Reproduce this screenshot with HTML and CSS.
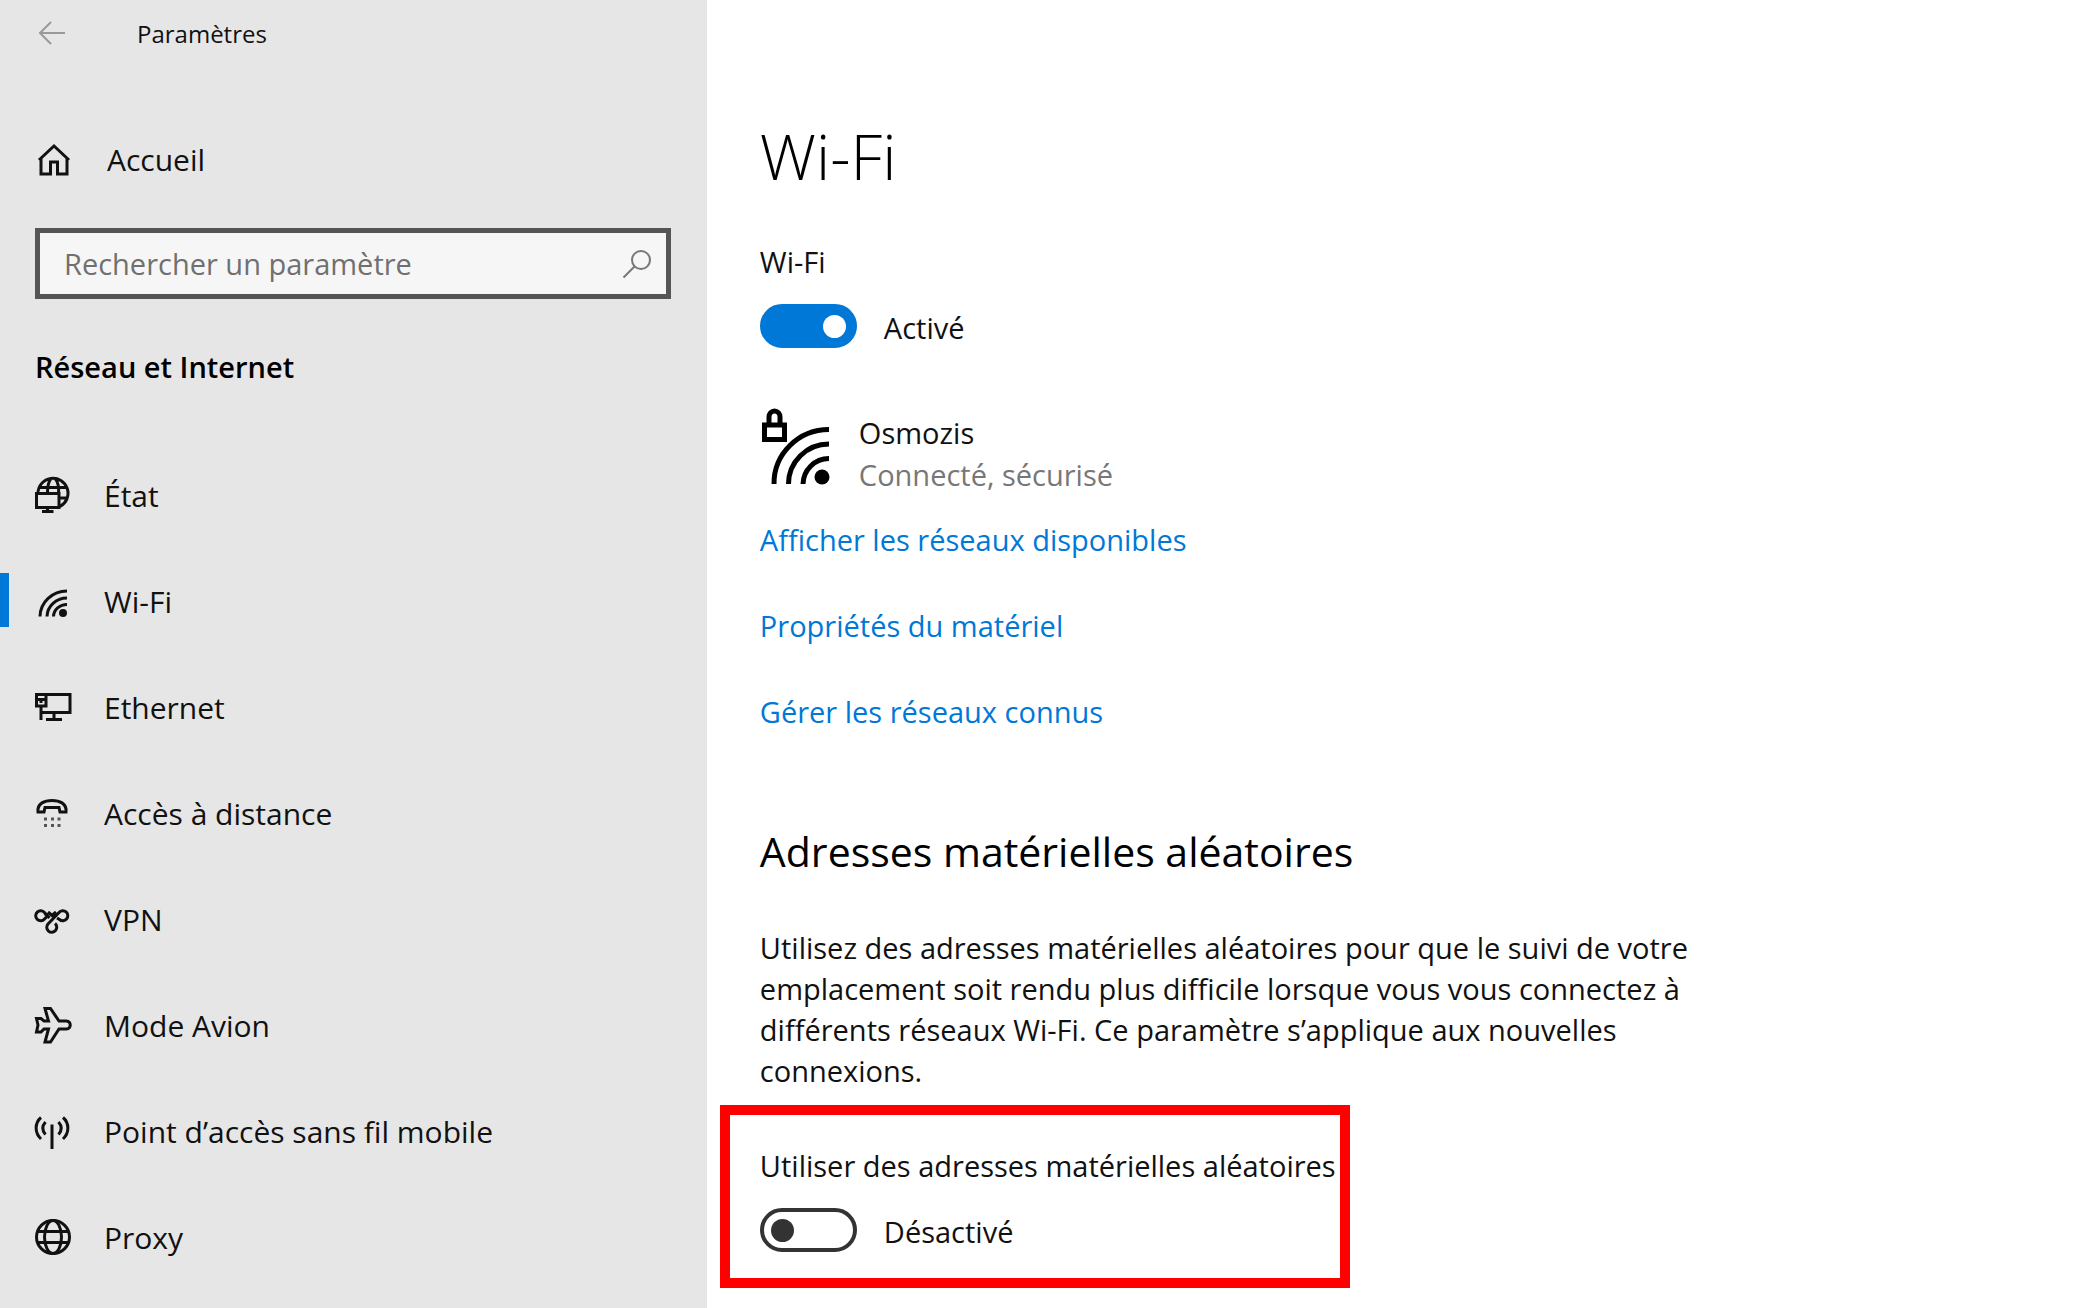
FILE: index.html
```html
<!DOCTYPE html>
<html lang="fr">
<head>
<meta charset="utf-8">
<meta name="viewport" content="width=device-width, initial-scale=1">
<title>Paramètres</title>
<link rel="stylesheet" href="styles.css">
</head>
<body>
<div class="app">
  <aside class="sidebar">
    <header class="titlebar">
      <button class="back" type="button" aria-label="Retour">
        <svg width="28" height="28" viewBox="0 0 28 28"><path d="M27 13H2M13 2L2 13l11 11"/></svg>
      </button>
      <span class="app-name">Paramètres</span>
    </header>
    <a class="home" href="#accueil">
      <svg class="icon" viewBox="0 0 36 36"><path d="M4 18L19 4l15 14M6 17V32H15.500V20h7V32h9.500V17"/></svg>
      <span>Accueil</span>
    </a>
    <label class="search">
      <input type="search" placeholder="Rechercher un paramètre" aria-label="Rechercher un paramètre">
      <svg width="30" height="30" viewBox="0 0 30 30"><circle cx="19" cy="11" r="9"/><path d="M12.500 17.500L1.500 28.500"/></svg>
    </label>
    <h2 class="category">Réseau et Internet</h2>
    <nav class="nav">
      <a href="#etat">
        <svg class="icon" viewBox="0 0 36 36"><path d="M3 17A15 15 0 1 1 25 30.500M5 11.500H31M24 22H31.500M12.500 17C12.500 10 14 5 16 2.500M20 2.500C23 5 24 12 23.500 17M1.500 17.500H24V31.500H1.500ZM12.500 32v3.500M7 35.500H18.500"/></svg>
        <span>État</span>
      </a>
      <a href="#wifi" class="active" aria-current="page">
        <svg class="icon" viewBox="0 0 36 36"><path d="M5 34.500A27 26 0 0 1 32 9M12 34.500A20 19 0 0 1 32 16M18.500 34.500A13.500 12.500 0 0 1 32 22.500"/><circle class="solid" cx="28" cy="31" r="2.500"/></svg>
        <span>Wi-Fi</span>
      </a>
      <a href="#ethernet">
        <svg class="icon" viewBox="0 0 36 36"><path d="M11 6.500H35V24.500H6M1.500 6.500H11V18H1.500ZM1.500 11.500H11M6 11v4M6 18V32M19 25v6M11 31.500H27"/></svg>
        <span>Ethernet</span>
      </a>
      <a href="#distance">
        <svg class="icon" viewBox="0 0 36 36"><path d="M3 18C2 9 10 6.500 17 6.500S32 9 31 18H25L24 13.500H10L9 18Z"/><path class="dots" d="M9 25h3M16 25h3M22.500 25h3M9 31.500h3M16 31.500h3M22.500 31.500h3"/></svg>
        <span>Accès à distance</span>
      </a>
      <a href="#vpn">
        <svg class="icon" viewBox="0 0 36 36"><path d="M9.500 12.500A5 5 0 1 0 9.500 19L12 16.500L9.500 12.500L14.500 18M13 12l4 3.500 4-3.500M20 23.500A5 5 0 1 1 13 24L24 12.500A5 5 0 1 1 24.500 19.500L22 18"/></svg>
        <span>VPN</span>
      </a>
      <a href="#avion">
        <svg class="icon" viewBox="0 0 36 36"><path d="M10 2.500H15.500L24 15H31.500C36.500 15 36.500 23 31.500 23H24L15.500 36H10L13.500 23H9L6 26H1.500L3 19L1.500 12.500H6L9 15H13.500Z"/></svg>
        <span>Mode Avion</span>
      </a>
      <a href="#point-acces">
        <svg class="icon" viewBox="0 0 36 36"><path d="M6 5.500C-.500 11 -.500 21 6 27M10.500 10C7 14 7 18.500 10.500 22.500M28 5.500C34.500 11 34.500 21 28 27M23.500 10C27 14 27 18.500 23.500 22.500M17 12.500V37"/></svg>
        <span>Point d’accès sans fil mobile</span>
      </a>
      <a href="#proxy">
        <svg class="icon" viewBox="0 0 36 36"><circle cx="18" cy="19" r="16.500"/><ellipse cx="18" cy="19" rx="8.500" ry="16.500"/><path d="M2.500 13.500H33.500M2.500 24.500H33.500"/></svg>
        <span>Proxy</span>
      </a>
    </nav>
  </aside>

  <main class="content">
    <h1>Wi-Fi</h1>
    <section class="setting">
      <label for="wifi-switch">Wi-Fi</label>
      <div class="switch-row">
        <input class="switch" id="wifi-switch" type="checkbox" role="switch" checked>
        <span>Activé</span>
      </div>
    </section>
    <section class="network">
      <svg width="76" height="82" viewBox="0 0 76 82">
        <path class="arc" d="M14 76A55 54 0 0 1 69 21.500M28.500 76A40.500 40 0 0 1 69 36M43 76A26 26 0 0 1 69 50.500"/>
        <circle cx="62" cy="69" r="7.500"/>
        <path class="lock" d="M4.500 17H24.500V31.500H4.500ZM9 17V9a5.500 6 0 0 1 11 0V17"/>
      </svg>
      <div class="network-text">
        <div>Osmozis</div>
        <div class="status">Connecté, sécurisé</div>
      </div>
    </section>
    <div class="links">
      <a href="#reseaux">Afficher les réseaux disponibles</a>
      <a href="#materiel">Propriétés du matériel</a>
      <a href="#connus">Gérer les réseaux connus</a>
    </div>
    <h2>Adresses matérielles aléatoires</h2>
    <p>Utilisez des adresses matérielles aléatoires pour que le suivi de votre emplacement soit rendu plus difficile lorsque vous vous connectez à différents réseaux Wi-Fi. Ce paramètre s’applique aux nouvelles connexions.</p>
    <section class="setting highlight">
      <label for="random-switch">Utiliser des adresses matérielles aléatoires</label>
      <div class="switch-row">
        <input class="switch" id="random-switch" type="checkbox" role="switch">
        <span>Désactivé</span>
      </div>
    </section>
  </main>
</div>
</body>
</html>
```
FILE: styles.css
```css
* { box-sizing: border-box; }

body {
  margin: 0;
  background: #fff;
  color: #111;
  font: 29px/40px "Segoe UI", "Open Sans", "Noto Sans", sans-serif;
}

h1, h2, p { margin: 0; }
a { color: inherit; text-decoration: none; }
svg { flex: none; fill: none; stroke: currentColor; overflow: visible; }

.app { display: flex; min-height: 100vh; }

/* Sidebar */
.sidebar { flex: none; width: 34%; background: #e6e6e6; }

.titlebar {
  display: flex;
  align-items: center;
  gap: 71px;
  padding: 14px 38px 0;
  font-size: 24px;
}
.back {
  display: flex;
  padding: 0;
  border: 0;
  background: none;
  color: #999;
}
.back svg { stroke-width: 2; }

.icon { width: 36px; height: 36px; stroke-width: 3; }
.icon .solid { fill: currentColor; }
.icon .dots { stroke: #555; }

.home {
  display: flex;
  align-items: center;
  gap: 36px;
  margin-top: 86px;
  padding-left: 35px;
  font-size: 30px;
}

.search {
  display: flex;
  align-items: center;
  height: 71px;
  margin: 48px 36px 0 35px;
  padding: 0 14px 0 24px;
  border: 5px solid #555;
  background: #f6f6f6;
  color: #777;
}
.search input {
  flex: 1;
  min-width: 0;
  padding: 0;
  border: 0;
  outline: 0;
  background: none;
  font: inherit;
}
.search input::placeholder { color: #707070; opacity: 1; }
.search svg { stroke-width: 2; }

.category {
  margin: 48px 35px 54px;
  color: #000;
  font-size: 29px;
  font-weight: 600;
}

.nav { font-size: 30px; }
.nav a {
  display: flex;
  align-items: center;
  gap: 33px;
  height: 106px;
  padding-left: 35px;
}
.nav span { padding-top: 4px; }
.nav .active {
  background: linear-gradient(#0078d7, #0078d7) left center / 9px 54px no-repeat;
}

/* Content */
.content { flex: 1; min-width: 0; padding: 120px 53px 21px; }

h1 {
  color: #000;
  font-size: 63px;
  font-weight: 300;
  line-height: 72px;
}
.content h2 {
  margin: 91px 0 48px;
  color: #000;
  font-size: 41px;
  font-weight: 400;
  line-height: 56px;
}
.content p { max-width: 960px; line-height: 41px; }

.setting { display: flex; flex-direction: column; gap: 22px; }
h1 + .setting { margin-top: 50px; }
.switch-row { display: flex; align-items: center; gap: 27px; }
.switch-row span { padding-top: 4px; }

.switch {
  appearance: none;
  display: flex;
  align-items: center;
  width: 97px;
  height: 44px;
  margin: 0;
  padding: 0 7px;
  border: 4px solid #333;
  border-radius: 22px;
}
.switch::before {
  content: "";
  width: 23px;
  height: 23px;
  border-radius: 50%;
  background: #333;
}
.switch:checked {
  justify-content: flex-end;
  border-color: #0078d7;
  background: #0078d7;
}
.switch:checked::before { background: #fff; }

.network {
  display: flex;
  gap: 23px;
  margin-top: 60px;
  line-height: 42px;
}
.network-text { padding-top: 4px; }
.network svg { color: #000; }
.network circle { fill: currentColor; stroke: none; }
.network .arc { stroke-width: 5; }
.network .lock { stroke-width: 5; }
.status { color: #777; }

.links {
  display: flex;
  flex-direction: column;
  align-items: flex-start;
  gap: 46px;
  margin-top: 24px;
  color: #0078d7;
}

.highlight {
  width: fit-content;
  margin: 14px 0 0 -40px;
  padding: 31px 4px 26px 30px;
  border: 10px solid #f00;
}
```
